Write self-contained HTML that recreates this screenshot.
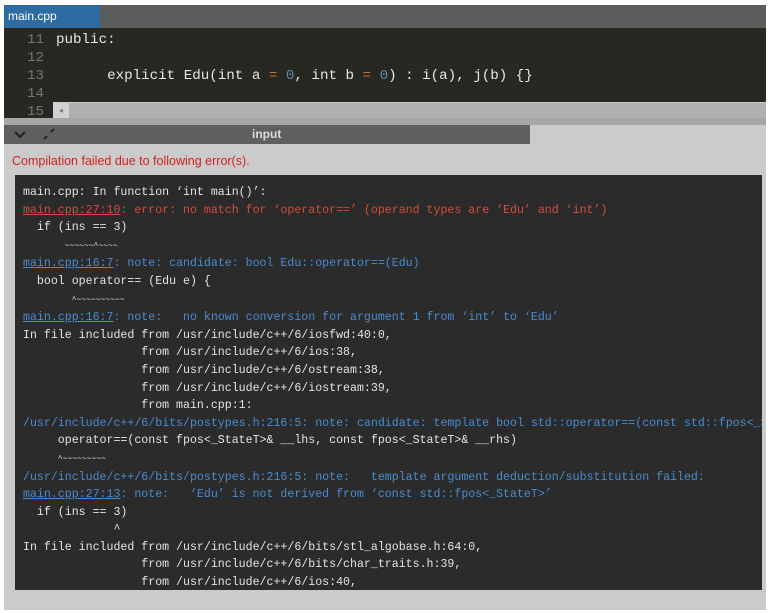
<!DOCTYPE html>
<html><head><meta charset="utf-8"><style>
*{margin:0;padding:0;box-sizing:border-box}
body{width:768px;height:613px;background:#fff;position:relative;overflow:hidden;font-family:"Liberation Sans",sans-serif}
.abs{position:absolute}
#tabbar{left:4px;top:5px;width:762px;height:23px;background:#5c5c5c}
#tab{left:4px;top:5px;width:96px;height:23px;background:#2f6ba3;color:#fff;font-size:12px;line-height:23px;padding-left:4px}
#ed{left:4px;top:28px;width:762px;height:96px;background:#272822;font-family:"Liberation Mono",monospace;font-size:14.2px}
.ln{position:absolute;left:18px;color:#75766e;width:22px;text-align:right}
.cd{position:absolute;left:52px;color:#e8e8e2;white-space:pre}
#scroll{left:53px;top:102px;width:713px;height:16px;background:#b0b0b0;border-top:1px solid #ccc}
#scroll i{position:absolute;left:0;top:0;width:16px;height:15px;background:#d2d2d2;font-style:normal;font-size:8px;color:#777;line-height:15px;text-align:center}
#strip{left:4px;top:118px;width:762px;height:7px;background:#a6a6a6}
#gray{left:4px;top:125px;width:762px;height:485px;background:#cbcbcb}
#bar{left:4px;top:125px;width:526px;height:19px;background:#5f5f5f;color:#ddd;font-weight:bold;font-size:12px;line-height:18px}
#err{left:12px;top:154px;color:#d42020;font-size:12.5px}
#con{left:15px;top:175px;width:747px;height:415px;background:#2b2b2b;font-family:"Liberation Mono",monospace;font-size:11.6px;color:#e4e4e4;padding:9px 0 0 8px;white-space:pre;line-height:17.6px;overflow:hidden}
.r{color:#d84a3e}.b{color:#4a8cd0}.u{text-decoration:underline}
.t{font-size:8px;letter-spacing:0}
</style></head><body>
<div class="abs" id="tabbar"></div>
<div class="abs" id="tab">main.cpp</div>
<div class="abs" id="ed">
<div class="ln" style="top:4px">11</div><div class="cd" style="top:4px">public:</div>
<div class="ln" style="top:22px">12</div>
<div class="ln" style="top:40px">13</div><div class="cd" style="top:40px">      explicit Edu(int a <span style="color:#c07030">=</span> <span style="color:#5a8ab0">0</span>, int b <span style="color:#c07030">=</span> <span style="color:#5a8ab0">0</span>) : i(a), j(b) {}</div>
<div class="ln" style="top:58px">14</div>
<div class="ln" style="top:76px">15</div>
</div>
<div class="abs" id="scroll"><i>◂</i></div>
<div class="abs" id="strip"></div>
<div class="abs" id="gray"></div>
<div class="abs" id="bar">
<svg class="abs" style="left:10px;top:5px" width="12" height="9"><path d="M1 2 L6 7 L11 2" stroke="#222" stroke-width="2.2" fill="none"/></svg>
<svg class="abs" style="left:38px;top:2px" width="14" height="14"><path d="M2 12 L5 9 M9 5 L12 2" stroke="#222" stroke-width="2" fill="none"/></svg>
<span class="abs" style="left:248px;top:0">input</span>
</div>
<div class="abs" id="err">Compilation failed due to following error(s).</div>
<div class="abs" id="con">main.cpp: In function ‘int main()’:
<span class="r"><span class="u">main.cpp:27:10</span>: error: no match for ‘operator==’ (operand types are ‘Edu’ and ‘int’)</span>
  if (ins == 3)
      <span class="t">~~~~~~^~~~~</span>
<span class="b"><span class="u">main.cpp:16:7</span>: note: candidate: bool Edu::operator==(Edu)</span>
  bool operator== (Edu e) {
       <span class="t">^~~~~~~~~~~</span>
<span class="b"><span class="u">main.cpp:16:7</span>: note:   no known conversion for argument 1 from ‘int’ to ‘Edu’</span>
In file included from /usr/include/c++/6/iosfwd:40:0,
                 from /usr/include/c++/6/ios:38,
                 from /usr/include/c++/6/ostream:38,
                 from /usr/include/c++/6/iostream:39,
                 from main.cpp:1:
<span class="b">/usr/include/c++/6/bits/postypes.h:216:5: note: candidate: template bool std::operator==(const std::fpos&lt;_StateT&gt;&amp;, const std::fpos&lt;_StateT&gt;&amp;)</span>
     operator==(const fpos&lt;_StateT&gt;&amp; __lhs, const fpos&lt;_StateT&gt;&amp; __rhs)
     <span class="t">^~~~~~~~~~</span>
<span class="b">/usr/include/c++/6/bits/postypes.h:216:5: note:   template argument deduction/substitution failed:</span>
<span class="b"><span class="u">main.cpp:27:13</span>: note:   ‘Edu’ is not derived from ‘const std::fpos&lt;_StateT&gt;’</span>
  if (ins == 3)
             ^
In file included from /usr/include/c++/6/bits/stl_algobase.h:64:0,
                 from /usr/include/c++/6/bits/char_traits.h:39,
                 from /usr/include/c++/6/ios:40,
</div>
</body></html>
